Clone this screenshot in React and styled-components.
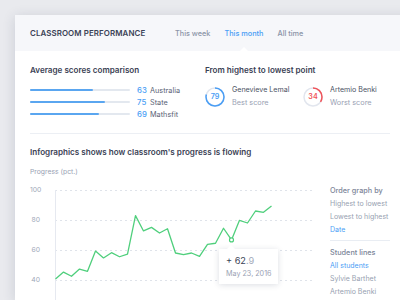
import React from 'react';
import styled, { createGlobalStyle } from 'styled-components';

const GlobalStyle = createGlobalStyle`
    html, body {
        margin: 0;
        padding: 0;
        background: #e9eaee;
        overflow: hidden;
        font-family: Inter, "Liberation Sans", sans-serif;
        -webkit-font-smoothing: antialiased;
    }
`
const Page = styled.div`
    width: 400px;
    height: 300px;
    padding: 15px 0 0 15px;
    box-sizing: border-box;
    overflow: hidden;
`
const Card = styled.div`
    width: 400px;
    background: #fff;
    box-shadow: 0 2px 12px rgba(40, 50, 80, 0.16);
`
const Header = styled.div`
    height: 36px;
    background: #f6f7fa;
    padding: 0 15px;
    display: flex;
    align-items: stretch;
`
const Title = styled.div`
    display: flex;
    align-items: center;
    font-size: 7.9px;
    font-weight: 600;
    letter-spacing: 0.1px;
    color: #3a4256;
    width: 145px;
    white-space: nowrap;
`
const Tabs = styled.div`
    display: flex;
    gap: 14px;
`
const Tab = styled.div`
    position: relative;
    display: flex;
    align-items: center;
    font-size: 7.3px;
    font-weight: 500;
    color: ${props => props.active ? '#4a9ef5' : '#8b94a7'};
    &::after {
        content: '';
        display: ${props => props.active ? 'block' : 'none'};
        position: absolute;
        bottom: 0;
        left: 50%;
        margin-left: -4px;
        border-left: 4px solid transparent;
        border-right: 4px solid transparent;
        border-bottom: 4px solid #fff;
    }
`
const Body = styled.div`
    padding: 14px 15px 0 15px;
    width: 360px;
`
const TopRow = styled.div`
    display: flex;
    padding-bottom: 14px;
    border-bottom: 1px solid #eceff4;
`
const Column = styled.div`
    width: ${props => props.width || 'auto'};
    flex-shrink: 0;
    display: flex;
    flex-direction: column;
`
const SectionTitle = styled.div`
    font-size: 8.1px;
    font-weight: 600;
    color: #3a4154;
    line-height: 11px;
    white-space: nowrap;
`
const Scores = styled.div`
    display: flex;
    flex-direction: column;
    gap: 2px;
    margin-top: 9px;
`
const ScoreRow = styled.div`
    display: flex;
    align-items: center;
    height: 10px;
`
const Track = styled.div`
    width: 100px;
    height: 2px;
    background: #e3e8ef;
    border-radius: 1px;
    margin-right: 7px;
`
const Fill = styled.div`
    height: 100%;
    background: #5aa6f0;
    border-radius: 1px;
`
const ScoreValue = styled.span`
    width: 13px;
    font-size: 7.8px;
    color: #4a9ef5;
    font-weight: 500;
`
const ScoreLabel = styled.span`
    font-size: 7.3px;
    color: #5a6275;
`
const People = styled.div`
    display: flex;
    margin-top: 9px;
`
const Person = styled.div`
    display: flex;
    align-items: center;
    width: 98px;
`
const Ring = styled.div`
    position: relative;
    width: 20px;
    height: 20px;
    margin-right: 7px;
    svg { display: block; }
`
const RingValue = styled.span`
    position: absolute;
    inset: 0;
    display: flex;
    align-items: center;
    justify-content: center;
    font-size: 7.2px;
    font-weight: 600;
    color: ${props => props.color};
`
const PersonText = styled.div`
    display: flex;
    flex-direction: column;
    gap: 3px;
`
const PersonName = styled.span`
    font-size: 7.1px;
    color: #4a5164;
    line-height: 10px;
    white-space: nowrap;
`
const PersonSub = styled.span`
    font-size: 7.3px;
    color: #9aa2b4;
    line-height: 10px;
`
const ChartSection = styled.div`
    padding-top: 13px;
`
const Caption = styled.div`
    font-size: 6.8px;
    color: #98a1b3;
    margin-top: 9px;
    line-height: 10px;
`
const ChartRow = styled.div`
    display: flex;
    margin-top: 8px;
`
const YAxis = styled.div`
    width: 10px;
    margin-right: 15px;
    display: flex;
    flex-direction: column;
    gap: 20px;
`
const YLabel = styled.span`
    font-size: 6.8px;
    color: #a0a8b8;
    line-height: 10px;
    text-align: right;
`
const Plot = styled.div`
    position: relative;
    width: 258px;
    height: 115px;
    margin-right: 17px;
    svg { display: block; }
`
const Tooltip = styled.div`
    position: absolute;
    left: 164px;
    top: 64px;
    width: 59px;
    height: 35px;
    box-sizing: border-box;
    padding: 6px 0 0 7px;
    background: #fff;
    box-shadow: 0 1px 6px rgba(40, 50, 80, 0.16);
    &::before {
        content: '';
        position: absolute;
        top: -4px;
        left: 8px;
        border-left: 4px solid transparent;
        border-right: 4px solid transparent;
        border-bottom: 4px solid #fff;
    }
`
const TipValue = styled.div`
    font-size: 9.2px;
    color: #3a4256;
    line-height: 11px;
    span { color: #a3abbb; }
`
const TipDate = styled.div`
    font-size: 7.2px;
    color: #9aa2b4;
    line-height: 10px;
    margin-top: 3px;
`
const Side = styled.div`
    width: 60px;
    margin-top: -1px;
`
const SideGroup = styled.div`
    display: flex;
    flex-direction: column;
    padding-bottom: ${props => props.divided ? '4px' : '0'};
    border-bottom: ${props => props.divided ? '1px solid #e9edf3' : 'none'};
    margin-bottom: ${props => props.divided ? '5px' : '0'};
`
const SideItem = styled.span`
    font-size: ${props => props.head ? '7.3px' : '7px'};
    line-height: 13px;
    white-space: nowrap;
    font-weight: ${props => props.head ? 500 : 400};
    color: ${props => props.head ? '#7d8699' : props.active ? '#4a9ef5' : '#979fb1'};
`

const scores = [
    { value: 63, label: 'Australia' },
    { value: 75, label: 'State' },
    { value: 69, label: 'Mathsfit' },
]

const progress = [40.7, 45.3, 42.5, 47.3, 45.8, 59.3, 54.7, 58.2, 55.5, 57.3, 82.9, 72.7, 75.1, 71.3,
    74.2, 58, 56.9, 58, 55.8, 63.8, 64.5, 74.5, 66.7, 79.8, 78, 86, 85.1, 89.3]

const toY = v => 5 + (100 - v) * 1.5

const ScoreRing = ({ value, color }) => {
    const r = 9
    const c = 2 * Math.PI * r
    return (
        <Ring>
            <svg width="20" height="20" viewBox="0 0 20 20">
                <circle cx="10" cy="10" r={r} fill="none" stroke="#e2e6ee" strokeWidth="1.5" />
                <circle cx="10" cy="10" r={r} fill="none" stroke={color} strokeWidth="1.5"
                    strokeDasharray={`${c * value / 100} ${c}`} transform="rotate(-90 10 10)" />
            </svg>
            <RingValue color={color}>{value}</RingValue>
        </Ring>
    )
}

const Chart = () => {
    const points = progress.map((v, i) => `${i * 8 + 0.5},${toY(v)}`).join(' ')
    return (
        <Plot>
            <svg width="258" height="115" viewBox="0 0 258 115">
                {[100, 80, 60, 40].map(g => (
                    <line key={g} x1="0" x2="258" y1={toY(g) + 0.5} y2={toY(g) + 0.5}
                        stroke="#dfe3ea" strokeDasharray="2 3" />
                ))}
                <line x1="0.5" x2="0.5" y1="5" y2="115" stroke="#e6e9f0" />
                <polyline points={points} fill="none" stroke="#4fcf7c" strokeWidth="1.3" strokeLinejoin="round" />
                <circle cx={22 * 8 + 0.5} cy={toY(progress[22])} r="2" fill="#fff" stroke="#4fcf7c" strokeWidth="1.2" />
            </svg>
            <Tooltip>
                <TipValue>+ 62<span>.9</span></TipValue>
                <TipDate>May 23, 2016</TipDate>
            </Tooltip>
        </Plot>
    )
}

const App = () => {
    return (
        <Page>
            <GlobalStyle />
            <Card>
                <Header>
                    <Title>CLASSROOM PERFORMANCE</Title>
                    <Tabs>
                        <Tab>This week</Tab>
                        <Tab active>This month</Tab>
                        <Tab>All time</Tab>
                    </Tabs>
                </Header>
                <Body>
                    <TopRow>
                        <Column width="175px">
                            <SectionTitle>Average scores comparison</SectionTitle>
                            <Scores>
                                {scores.map(s => (
                                    <ScoreRow key={s.label}>
                                        <Track><Fill style={{ width: `${s.value * 1.0}%` }} /></Track>
                                        <ScoreValue>{s.value}</ScoreValue>
                                        <ScoreLabel>{s.label}</ScoreLabel>
                                    </ScoreRow>
                                ))}
                            </Scores>
                        </Column>
                        <Column>
                            <SectionTitle>From highest to lowest point</SectionTitle>
                            <People>
                                <Person>
                                    <ScoreRing value={79} color="#4a9ef5" />
                                    <PersonText>
                                        <PersonName>Genevieve Lemal</PersonName>
                                        <PersonSub>Best score</PersonSub>
                                    </PersonText>
                                </Person>
                                <Person>
                                    <ScoreRing value={34} color="#f0545a" />
                                    <PersonText>
                                        <PersonName>Artemio Benki</PersonName>
                                        <PersonSub>Worst score</PersonSub>
                                    </PersonText>
                                </Person>
                            </People>
                        </Column>
                    </TopRow>
                    <ChartSection>
                        <SectionTitle>Infographics shows how classroom's progress is flowing</SectionTitle>
                        <Caption>Progress (pct.)</Caption>
                        <ChartRow>
                            <YAxis>
                                <YLabel>100</YLabel>
                                <YLabel>80</YLabel>
                                <YLabel>60</YLabel>
                                <YLabel>40</YLabel>
                            </YAxis>
                            <Chart />
                            <Side>
                                <SideGroup divided>
                                    <SideItem head>Order graph by</SideItem>
                                    <SideItem>Highest to lowest</SideItem>
                                    <SideItem>Lowest to highest</SideItem>
                                    <SideItem active>Date</SideItem>
                                </SideGroup>
                                <SideGroup>
                                    <SideItem head>Student lines</SideItem>
                                    <SideItem active>All students</SideItem>
                                    <SideItem>Sylvie Barthet</SideItem>
                                    <SideItem>Artemio Benki</SideItem>
                                </SideGroup>
                            </Side>
                        </ChartRow>
                    </ChartSection>
                </Body>
            </Card>
        </Page>
    )
}

export default App;
